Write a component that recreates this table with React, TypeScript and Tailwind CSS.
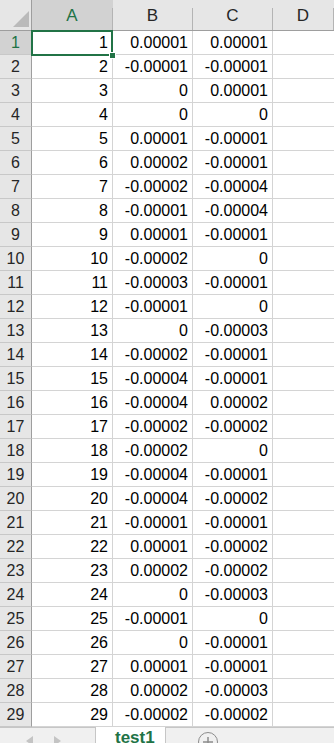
import React from "react";

const rows: [string, string, string][] = [
  ["1", "0.00001", "0.00001"],
  ["2", "-0.00001", "-0.00001"],
  ["3", "0", "0.00001"],
  ["4", "0", "0"],
  ["5", "0.00001", "-0.00001"],
  ["6", "0.00002", "-0.00001"],
  ["7", "-0.00002", "-0.00004"],
  ["8", "-0.00001", "-0.00004"],
  ["9", "0.00001", "-0.00001"],
  ["10", "-0.00002", "0"],
  ["11", "-0.00003", "-0.00001"],
  ["12", "-0.00001", "0"],
  ["13", "0", "-0.00003"],
  ["14", "-0.00002", "-0.00001"],
  ["15", "-0.00004", "-0.00001"],
  ["16", "-0.00004", "0.00002"],
  ["17", "-0.00002", "-0.00002"],
  ["18", "-0.00002", "0"],
  ["19", "-0.00004", "-0.00001"],
  ["20", "-0.00004", "-0.00002"],
  ["21", "-0.00001", "-0.00001"],
  ["22", "0.00001", "-0.00002"],
  ["23", "0.00002", "-0.00002"],
  ["24", "0", "-0.00003"],
  ["25", "-0.00001", "0"],
  ["26", "0", "-0.00001"],
  ["27", "0.00001", "-0.00001"],
  ["28", "0.00002", "-0.00003"],
  ["29", "-0.00002", "-0.00002"],
];

function ColHeader({ label, selected, width }: { label: string; selected?: boolean; width: string }) {
  return (
    <div
      className={`${width} flex h-full border-b border-[#9e9e9e] ${
        selected ? "bg-[#d2d2d2] text-[#217346]" : "bg-[#e6e6e6] text-[#262626]"
      }`}
    >
      <div className="flex-1 flex items-center justify-center pt-[2px] text-[17px]">{label}</div>
      <div className="w-px h-[22px] self-end bg-[#b4b4b4]" />
    </div>
  );
}

export default function App() {
  return (
    <div
      className="w-[334px] h-[743px] overflow-hidden flex flex-col bg-white"
      style={{ fontFamily: '"Liberation Sans", Arial, sans-serif' }}
    >
      {/* Header row */}
      <div className="flex h-[31px] shrink-0">
        <div className="w-[32px] h-full bg-[#e6e6e6] border-b border-r border-[#9e9e9e] flex items-end justify-end pr-[2px] pb-[3px]">
          <svg width="16" height="16" viewBox="0 0 16 16">
            <polygon points="16,0 16,16 0,16" fill="#bababa" />
          </svg>
        </div>
        <ColHeader label="A" selected width="w-[81px]" />
        <ColHeader label="B" width="w-[80px]" />
        <ColHeader label="C" width="w-[80px]" />
        <ColHeader label="D" width="flex-1" />
      </div>

      {/* Data rows */}
      {rows.map((r, i) => {
        const sel = i === 0;
        return (
          <div key={i} className="flex h-[24px] shrink-0">
            <div
              className={`w-[32px] h-full border-b border-r border-b-[#c8c8c8] border-r-[#9e9e9e] flex items-center justify-center text-[16px] ${
                sel ? "bg-[#d2d2d2] text-[#217346]" : "bg-[#e6e6e6] text-[#262626]"
              }`}
            >
              {i + 1}
            </div>
            <div className="relative w-[81px] h-full border-b border-r border-[#d4d4d4] flex items-center justify-end pr-[4px] text-[16px] text-black">
              {r[0]}
              {sel && (
                <div className="absolute -left-px -top-px -right-px -bottom-[2px] border-2 border-[#217346] z-10">
                  <div className="absolute -right-[5px] -bottom-[5px] w-[7px] h-[7px] bg-[#217346] border border-white" />
                </div>
              )}
            </div>
            <div className="w-[80px] h-full border-b border-r border-[#d4d4d4] flex items-center justify-end pr-[4px] text-[16px] text-black">
              {r[1]}
            </div>
            <div className="w-[80px] h-full border-b border-r border-[#d4d4d4] flex items-center justify-end pr-[4px] text-[16px] text-black">
              {r[2]}
            </div>
            <div className="flex-1 h-full border-b border-[#d4d4d4]" />
          </div>
        );
      })}

      {/* Sheet tab bar */}
      <div className="flex flex-1 bg-[#f0f0f0] border-t border-[#c6c6c6]">
        <div className="w-[95px] flex items-start pt-[8px]">
          <svg className="ml-[26px]" width="7" height="10" viewBox="0 0 7 10">
            <polygon points="7,0 7,10 0,5" fill="#c4c4c4" />
          </svg>
          <svg className="ml-[21px]" width="7" height="10" viewBox="0 0 7 10">
            <polygon points="0,0 0,10 7,5" fill="#c4c4c4" />
          </svg>
        </div>
        <div className="w-[71px] -mt-px bg-white border-x border-[#c6c6c6] pl-[19px] pt-[1px] text-[17px] font-bold text-[#217346] leading-[20px]">
          test1
        </div>
        <div className="ml-[32px] mt-[4px] w-[20px] h-[20px] rounded-full border-[1.5px] border-[#8c8c8c] flex items-center justify-center shrink-0">
          <svg width="10" height="10" viewBox="0 0 10 10">
            <path d="M5 0V10M0 5H10" stroke="#8c8c8c" strokeWidth="1.5" />
          </svg>
        </div>
      </div>
    </div>
  );
}
